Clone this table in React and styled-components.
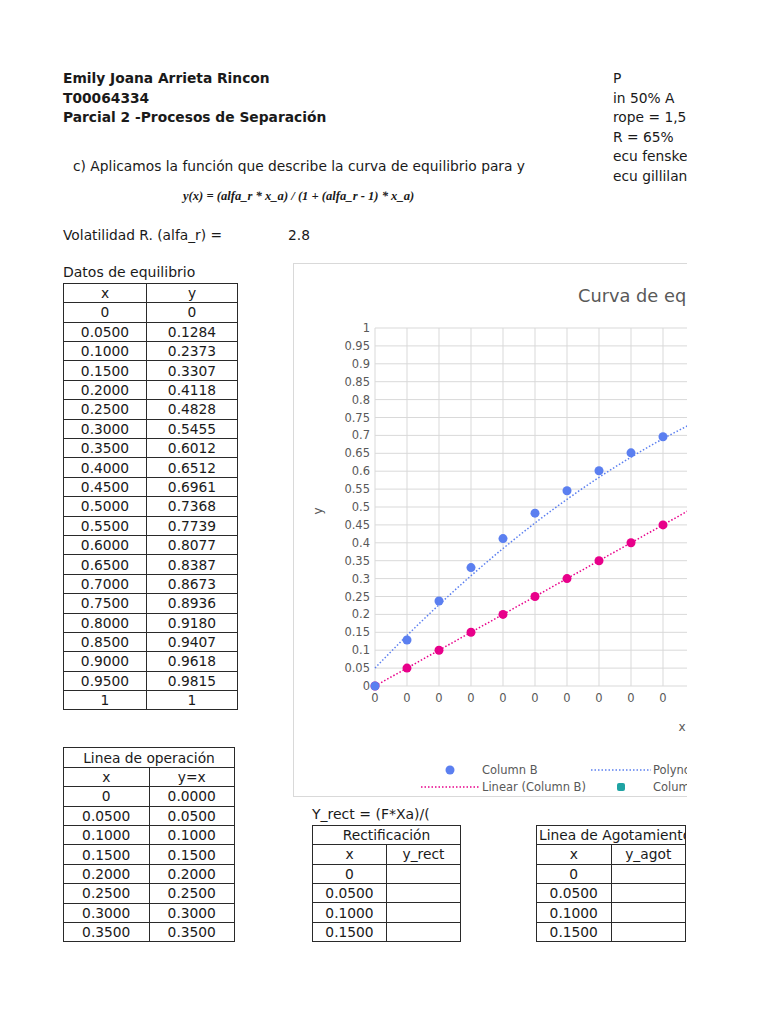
import React from 'react';
import styled, { createGlobalStyle } from 'styled-components';

const GlobalStyle = createGlobalStyle`
  body {
    margin: 0;
    background: #fff;
    font-family: 'DejaVu Sans', 'Liberation Sans', sans-serif;
    color: #1a1a1a;
  }
`;

const equilibrio = [
  ['0.0500', '0.1284'],
  ['0.1000', '0.2373'],
  ['0.1500', '0.3307'],
  ['0.2000', '0.4118'],
  ['0.2500', '0.4828'],
  ['0.3000', '0.5455'],
  ['0.3500', '0.6012'],
  ['0.4000', '0.6512'],
  ['0.4500', '0.6961'],
  ['0.5000', '0.7368'],
  ['0.5500', '0.7739'],
  ['0.6000', '0.8077'],
  ['0.6500', '0.8387'],
  ['0.7000', '0.8673'],
  ['0.7500', '0.8936'],
  ['0.8000', '0.9180'],
  ['0.8500', '0.9407'],
  ['0.9000', '0.9618'],
  ['0.9500', '0.9815'],
];

const operacion = [
  ['0', '0.0000'],
  ['0.0500', '0.0500'],
  ['0.1000', '0.1000'],
  ['0.1500', '0.1500'],
  ['0.2000', '0.2000'],
  ['0.2500', '0.2500'],
  ['0.3000', '0.3000'],
  ['0.3500', '0.3500'],
];

const shortRows = ['0', '0.0500', '0.1000', '0.1500'];

const Page = styled.div`
  width: 687px;
  overflow: hidden;
  box-sizing: border-box;
  padding: 69px 0 60px 63px;
`;

const Top = styled.div`
  display: flex;
`;

const HeaderBlock = styled.div`
  width: 550px;
  flex-shrink: 0;
`;

const NameLine = styled.div`
  font-weight: bold;
  font-size: 13.8px;
  line-height: 19.6px;
  white-space: nowrap;
`;

const Intro = styled.div`
  margin-top: 29px;
  padding-left: 10px;
  font-size: 13.8px;
  line-height: 19.6px;
  white-space: nowrap;
`;

const Formula = styled.div`
  margin-top: 10px;
  padding-left: 120px;
  font-family: 'Liberation Serif', 'Times New Roman', serif;
  font-style: italic;
  font-weight: bold;
  font-size: 12.6px;
  line-height: 20px;
  white-space: nowrap;
`;

const Notes = styled.div`
  font-size: 13.8px;
  line-height: 19.6px;
  white-space: nowrap;
`;

const ParamRow = styled.div`
  display: flex;
  margin-top: 19px;
  font-size: 13.8px;
  line-height: 20px;
`;

const ParamLabel = styled.span`
  width: 225px;
`;

const Main = styled.div`
  display: flex;
  gap: 57px;
  margin-top: 18px;
`;

const LeftCol = styled.div`
  width: 173px;
  flex-shrink: 0;
  display: flex;
  flex-direction: column;
`;

const RightCol = styled.div`
  display: flex;
  flex-direction: column;
  flex-shrink: 0;
`;

const Caption = styled.div`
  font-size: 14px;
  line-height: 19.5px;
  white-space: nowrap;
  padding-left: ${(p) => p.$indent || 0}px;
  margin-top: ${(p) => p.$top || 0}px;
`;

const Table = styled.table`
  border-collapse: collapse;
  table-layout: fixed;
  width: ${(p) => p.$width}px;
  margin-top: ${(p) => p.$top || 0}px;
  font-size: 13.8px;
`;

const Cell = styled.td`
  border: 1px solid #2a2a2a;
  height: 18.4px;
  padding: 0;
  line-height: 18px;
  white-space: nowrap;
  overflow: hidden;
  width: ${(p) => (p.$w ? `${p.$w}px` : 'auto')};
  text-align: ${(p) => p.$align || 'center'};
  padding-left: ${(p) => (p.$align === 'left' ? '2px' : '0')};
`;

const ChartBox = styled.div`
  width: 730px;
  height: 534px;
  box-sizing: border-box;
  border: 1px solid #d9d9d9;
  flex-shrink: 0;
`;

const BottomTables = styled.div`
  display: flex;
  gap: 75px;
  padding-left: 19px;
`;

const X0 = 81;
const Y0 = 422;
const DX = 32;
const H = 358;
const px = (i) => X0 + DX * i;
const py = (v) => Y0 - v * H;

const BLUE = '#5b7ff0';
const PINK = '#e8008a';
const TEAL = '#1fa3a3';
const GRID = '#d9d9d9';
const LABEL = '#595959';

const polyY = (i) => 0.05 + 0.0934 * i - 0.00247 * i * i;

const Chart = () => {
  const yTicks = Array.from({ length: 21 }, (_, k) => k * 0.05);
  const cols = Array.from({ length: 20 }, (_, k) => k);
  const blueVals = [0, ...equilibrio.map((r) => parseFloat(r[1]))];
  const pinkVals = Array.from({ length: 12 }, (_, k) => k * 0.05);
  const polyPts = Array.from({ length: 61 }, (_, k) => {
    const i = k * 0.2;
    return `${px(i).toFixed(1)},${py(polyY(i)).toFixed(1)}`;
  }).join(' ');

  return (
    <ChartBox>
      <svg width="728" height="532" style={{ display: 'block' }} fontFamily="DejaVu Sans, sans-serif">
        <text x="284" y="38" fontSize="17.8" fill={LABEL}>Curva de equilibrio</text>
        {yTicks.map((v) => (
          <line key={`h${v}`} x1={X0} x2={X0 + DX * 19} y1={py(v)} y2={py(v)} stroke={GRID} strokeWidth="1" />
        ))}
        {cols.map((k) => (
          <line key={`v${k}`} x1={px(k)} x2={px(k)} y1={py(1)} y2={Y0} stroke={GRID} strokeWidth="1" />
        ))}
        {yTicks.map((v, k) => (
          <text key={`t${k}`} x={76} y={py(v) + 4} fontSize="11.5" fill={LABEL} textAnchor="end">
            {k === 0 ? '0' : k === 20 ? '1' : parseFloat(v.toFixed(2)).toString()}
          </text>
        ))}
        {cols.map((k) => (
          <text key={`x${k}`} x={px(k)} y={438} fontSize="11.5" fill={LABEL} textAnchor="middle">0</text>
        ))}
        <text x="28" y="247" fontSize="12" fill={LABEL} textAnchor="middle" transform="rotate(-90 28 247)">y</text>
        <text x="388" y="467" fontSize="12" fill={LABEL} textAnchor="middle">x</text>

        <polyline points={polyPts} fill="none" stroke={BLUE} strokeWidth="1.5" strokeDasharray="1.5 2" />
        <line x1={px(0)} y1={py(0)} x2={px(19)} y2={py(0.95)} stroke={PINK} strokeWidth="1.5" strokeDasharray="1.5 2" />

        {pinkVals.map((v, i) => (
          <circle key={`p${i}`} cx={px(i)} cy={py(v)} r="4.5" fill={PINK} />
        ))}
        {blueVals.map((v, i) => (
          <circle key={`b${i}`} cx={px(i)} cy={py(v)} r="4.5" fill={BLUE} />
        ))}

        <circle cx="156" cy="506" r="4.5" fill={BLUE} />
        <text x="188" y="510" fontSize="11.5" fill={LABEL}>Column B</text>
        <line x1="297" x2="357" y1="506" y2="506" stroke={BLUE} strokeWidth="1.5" strokeDasharray="1.5 2" />
        <text x="359" y="510" fontSize="11.5" fill={LABEL}>Polynomial (Column B)</text>
        <line x1="127" x2="185" y1="523" y2="523" stroke={PINK} strokeWidth="1.5" strokeDasharray="1.5 2" />
        <text x="188" y="527" fontSize="11.5" fill={LABEL}>Linear (Column B)</text>
        <rect x="323" y="519" width="8" height="8" rx="2" fill={TEAL} />
        <text x="359" y="527" fontSize="11.5" fill={LABEL}>Column C</text>
      </svg>
    </ChartBox>
  );
};

const TwoColTable = ({ width, left, right, title, rows, top, titleAlign }) => (
  <Table $width={width} $top={top}>
    <tbody>
      {title && (
        <tr>
          <Cell colSpan={2} $align={titleAlign}>{title}</Cell>
        </tr>
      )}
      <tr>
        <Cell $w={left}>x</Cell>
        <Cell $w={right}>{title ? rows.header : 'y'}</Cell>
      </tr>
      {rows.body.map(([a, b], i) => (
        <tr key={i}>
          <Cell>{a}</Cell>
          <Cell>{b}</Cell>
        </tr>
      ))}
    </tbody>
  </Table>
);

const App = () => (
  <Page>
    <GlobalStyle />
    <Top>
      <HeaderBlock>
        <NameLine>Emily Joana Arrieta Rincon</NameLine>
        <NameLine>T00064334</NameLine>
        <NameLine>Parcial 2 -Procesos de Separación</NameLine>
        <Intro>c) Aplicamos la función que describe la curva de equilibrio para y</Intro>
        <Formula>y(x) = (alfa_r * x_a) / (1 + (alfa_r - 1) * x_a)</Formula>
      </HeaderBlock>
      <Notes>
        <div>P</div>
        <div>in 50% A</div>
        <div>rope = 1,5</div>
        <div>R = 65%</div>
        <div>ecu fenske</div>
        <div>ecu gillilan</div>
      </Notes>
    </Top>

    <ParamRow>
      <ParamLabel>Volatilidad R. (alfa_r) =</ParamLabel>
      <span>2.8</span>
    </ParamRow>

    <Main>
      <LeftCol>
        <Caption>Datos de equilibrio</Caption>
        <TwoColTable
          width={172}
          left={82}
          right={90}
          rows={{ body: [['0', '0'], ...equilibrio, ['1', '1']] }}
        />
        <TwoColTable
          width={172}
          left={82}
          right={90}
          top={37}
          title="Linea de operación"
          rows={{ header: 'y=x', body: operacion }}
        />
      </LeftCol>

      <RightCol>
        <Chart />
        <Caption $indent={19} $top={8}>Y_rect = (F*Xa)/(</Caption>
        <BottomTables>
          <TwoColTable
            width={149}
            left={74}
            right={75}
            title="Rectificación"
            rows={{ header: 'y_rect', body: shortRows.map((r) => [r, '']) }}
          />
          <TwoColTable
            width={150}
            left={75}
            right={75}
            title="Linea de Agotamiento"
            titleAlign="left"
            rows={{ header: 'y_agot', body: shortRows.map((r) => [r, '']) }}
          />
        </BottomTables>
      </RightCol>
    </Main>
  </Page>
);

export default App;
